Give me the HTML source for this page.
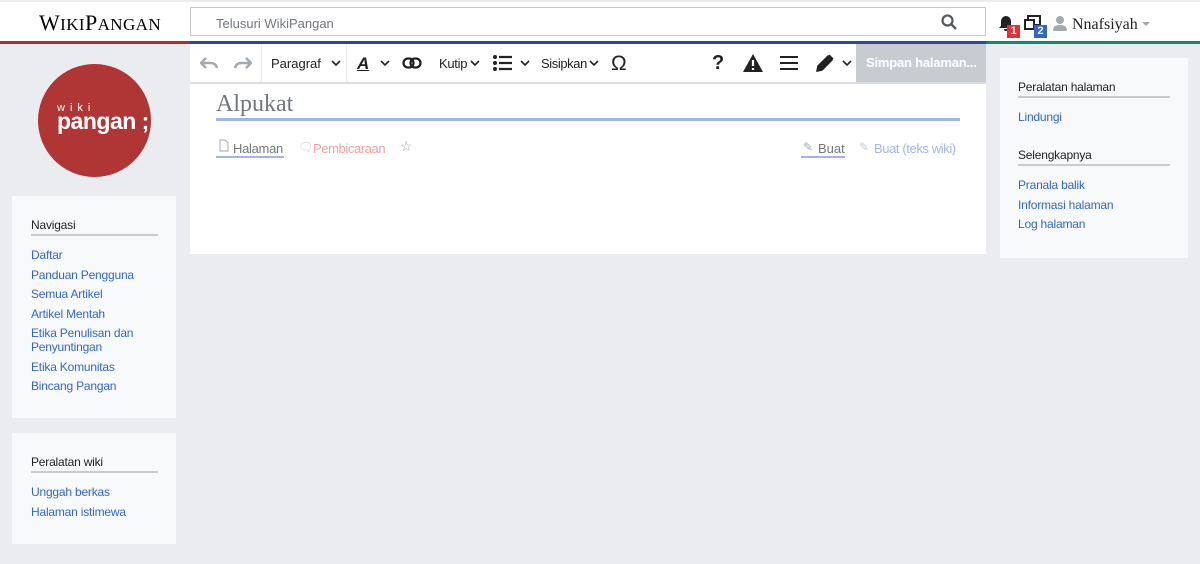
<!DOCTYPE html>
<html><head><meta charset="utf-8"><style>
*{box-sizing:border-box;margin:0;padding:0}
body{width:1200px;height:564px;background:#eaecf0;font-family:"Liberation Sans",sans-serif;position:relative;overflow:hidden;font-size:12px}
.abs{position:absolute}
a{color:#3366cc;text-decoration:none}
.panel{position:absolute;background:#f8f9fa}
.panel h3{font-weight:normal;font-size:12px;color:#222;border-bottom:2px solid #c8ccd1;padding-bottom:2px;margin-bottom:12px;letter-spacing:-0.2px}
.panel a{display:block;font-size:12px;line-height:14px;margin-bottom:5.5px;letter-spacing:-0.2px}
.tb{position:absolute;top:44px;height:39px;display:flex;align-items:center;font-size:13px;color:#222}
</style></head><body>
<div class="abs" style="left:0;top:0;width:1200px;height:41px;background:#fff;border-top:2px solid #eaecf0"></div>
<div class="abs" style="left:39px;top:10px;font-family:'Liberation Serif',serif;font-size:22px;color:#000;letter-spacing:0.4px">W<span style="font-size:17px">IKI</span>P<span style="font-size:17px">ANGAN</span></div>
<div class="abs" style="left:190px;top:7px;width:796px;height:29px;border:1px solid #c8ccd1;background:#fff"></div>
<div class="abs" style="left:216px;top:16px;font-size:13px;color:#72777d">Telusuri WikiPangan</div>
<svg class="abs" style="left:941px;top:14px" width="16" height="16" viewBox="0 0 16 16"><circle cx="6.5" cy="6.5" r="5" fill="none" stroke="#54595d" stroke-width="2.2"/><path d="M10 10l5 5" stroke="#54595d" stroke-width="2.4"/></svg>
<svg class="abs" style="left:998px;top:14px" width="16" height="18" viewBox="0 0 16 18"><path d="M3 12V7a5 5 0 0 1 10 0v5l2 2H1z M6 15h4a2 2 0 0 1-4 0z" fill="#222"/></svg>
<div class="abs" style="left:1007px;top:25px;width:13px;height:13px;background:#dd3333;color:#fff;font-size:11px;font-weight:bold;text-align:center;line-height:13px">1</div>
<svg class="abs" style="left:1024px;top:15px" width="18" height="16" viewBox="0 0 18 16"><rect x="4" y="1" width="12" height="9" fill="none" stroke="#222" stroke-width="2"/><rect x="1" y="5" width="9" height="9" fill="#fff" stroke="#222" stroke-width="2"/></svg>
<div class="abs" style="left:1034px;top:25px;width:13px;height:13px;background:#3366cc;color:#fff;font-size:11px;font-weight:bold;text-align:center;line-height:13px">2</div>
<svg class="abs" style="left:1053px;top:15px" width="14" height="16" viewBox="0 0 14 16"><circle cx="7" cy="5" r="4" fill="#a2a9b1"/><path d="M0 16c0-5 3-6 7-6s7 1 7 6z" fill="#a2a9b1"/></svg>
<div class="abs" style="left:1072px;top:16px;font-family:'Liberation Serif',serif;font-size:16px;color:#222">Nnafsiyah</div>
<div class="abs" style="left:1142px;top:22px;border:4px solid transparent;border-top:4px solid #a2a9b1"></div>
<div class="abs" style="left:0;top:41px;width:190px;height:3px;background:#b32d2e"></div>
<div class="abs" style="left:190px;top:41px;width:796px;height:3px;background:#2a4b8d"></div>
<div class="abs" style="left:986px;top:41px;width:214px;height:3px;background:#14866d"></div>

<div class="abs" style="left:38px;top:64px;width:113px;height:113px;border-radius:50%;background:#b03636"></div>
<div class="abs" style="left:57px;top:102px;color:#fff;font-size:11px;letter-spacing:5px">wiki</div>
<div class="abs" style="left:57px;top:108px;color:#fff;font-size:23px;font-weight:bold;letter-spacing:-0.5px">pangan ;</div>

<div class="panel" style="left:12px;top:196px;width:164px;height:222px;padding:22px 18px 0 19px">
<h3>Navigasi</h3>
<a>Daftar</a><a>Panduan Pengguna</a><a>Semua Artikel</a><a>Artikel Mentah</a><a>Etika Penulisan dan Penyuntingan</a><a>Etika Komunitas</a><a>Bincang Pangan</a>
</div>
<div class="panel" style="left:12px;top:433px;width:164px;height:111px;padding:22px 18px 0 19px">
<h3>Peralatan wiki</h3>
<a>Unggah berkas</a><a>Halaman istimewa</a>
</div>
<div class="panel" style="left:1000px;top:58px;width:188px;height:200px;padding:22px 18px 0 18px">
<h3>Peralatan halaman</h3>
<a>Lindungi</a>
<h3 style="margin-top:24px">Selengkapnya</h3>
<a>Pranala balik</a><a>Informasi halaman</a><a>Log halaman</a>
</div>

<div class="abs" style="left:190px;top:44px;width:796px;height:210px;background:#fff"></div>
<div class="abs" style="left:190px;top:82px;width:796px;height:2px;background:#dadde0"></div>
<div class="abs" style="left:261px;top:44px;width:1px;height:38px;background:#eaecf0"></div>
<div class="abs" style="left:346px;top:44px;width:1px;height:38px;background:#eaecf0"></div>
<div class="abs" style="left:856px;top:44px;width:130px;height:38px;background:#c8ccd1;color:#fff;font-weight:bold;font-size:13px;line-height:38px;padding-left:10px;letter-spacing:-0.2px">Simpan halaman...</div>
<svg class="abs" style="left:200px;top:57px" width="18" height="12" viewBox="0 0 18 12"><path d="M6 1L1 6l5 5M1 6h10a6 6 0 0 1 6 5" fill="none" stroke="#a2a9b1" stroke-width="2.5"/></svg>
<svg class="abs" style="left:234px;top:57px" width="18" height="12" viewBox="0 0 18 12"><path d="M12 1l5 5-5 5M17 6H7a6 6 0 0 0-6 5" fill="none" stroke="#a2a9b1" stroke-width="2.5"/></svg>
<div class="tb" style="left:271px">Paragraf</div>
<svg class="abs" style="left:331px;top:60px" width="10" height="7"><path d="M1 1l4 4 4-4" fill="none" stroke="#222" stroke-width="1.6"/></svg>
<div class="tb" style="left:357px;font-weight:bold;font-style:italic;font-size:17px;text-decoration:underline">A</div>
<svg class="abs" style="left:380px;top:60px" width="10" height="7"><path d="M1 1l4 4 4-4" fill="none" stroke="#222" stroke-width="1.6"/></svg>
<svg class="abs" style="left:402px;top:57px" width="20" height="12" viewBox="0 0 20 12"><rect x="1.5" y="1.5" width="10" height="9" rx="4.5" fill="none" stroke="#222" stroke-width="2.3"/><rect x="8.5" y="1.5" width="10" height="9" rx="4.5" fill="none" stroke="#222" stroke-width="2.3"/></svg>
<div class="tb" style="left:439px;letter-spacing:-0.3px">Kutip</div>
<svg class="abs" style="left:470px;top:60px" width="10" height="7"><path d="M1 1l4 4 4-4" fill="none" stroke="#222" stroke-width="1.6"/></svg>
<svg class="abs" style="left:493px;top:55px" width="20" height="16" viewBox="0 0 20 16"><circle cx="2" cy="2" r="2" fill="#222"/><circle cx="2" cy="8" r="2" fill="#222"/><circle cx="2" cy="14" r="2" fill="#222"/><path d="M6 2h13M6 8h13M6 14h13" stroke="#222" stroke-width="2.2"/></svg>
<svg class="abs" style="left:520px;top:60px" width="10" height="7"><path d="M1 1l4 4 4-4" fill="none" stroke="#222" stroke-width="1.6"/></svg>
<div class="tb" style="left:541px;letter-spacing:-0.4px">Sisipkan</div>
<svg class="abs" style="left:589px;top:60px" width="10" height="7"><path d="M1 1l4 4 4-4" fill="none" stroke="#222" stroke-width="1.6"/></svg>
<div class="tb" style="left:611px;font-size:21px">&#937;</div>
<div class="tb" style="left:712px;font-size:20px;font-weight:bold">?</div>
<svg class="abs" style="left:743px;top:54px" width="20" height="18" viewBox="0 0 20 18"><path d="M10 0L20 18H0z" fill="#222"/><path d="M10 6v6M10 14v2" stroke="#fff" stroke-width="2.2"/></svg>
<svg class="abs" style="left:780px;top:56px" width="18" height="14"><path d="M0 1h18M0 7h18M0 13h18" stroke="#222" stroke-width="2"/></svg>
<svg class="abs" style="left:816px;top:54px" width="18" height="18" viewBox="0 0 18 18"><path d="M1 17l1-5L12 2l4 4L6 16z M13 1l4 4" fill="#222" stroke="#222" stroke-width="1.5"/></svg>
<svg class="abs" style="left:842px;top:60px" width="10" height="7"><path d="M1 1l4 4 4-4" fill="none" stroke="#222" stroke-width="1.6"/></svg>

<div class="abs" style="left:216px;top:91px;font-family:'Liberation Serif',serif;font-size:24px;color:#72777d">Alpukat</div>
<div class="abs" style="left:216px;top:118px;width:744px;height:3px;background:#a3b5e6"></div>
<svg class="abs" style="left:219px;top:139px" width="10" height="13" viewBox="0 0 10 13"><path d="M1 1h5l3 3v8H1z" fill="none" stroke="#a2a9b1"/></svg>
<div class="abs" style="left:233px;top:141px;font-size:13px;color:#72777d;letter-spacing:-0.3px">Halaman</div>
<div class="abs" style="left:216px;top:156px;width:68px;height:2px;background:#a3b5e6"></div>
<div class="abs" style="left:298px;top:140px;font-size:12px;color:#c8ccd1">&#x1F5E8;</div>
<div class="abs" style="left:313px;top:141px;font-size:13px;color:#f0a0a0;letter-spacing:-0.4px">Pembicaraan</div>
<div class="abs" style="left:400px;top:138px;font-size:14px;color:#a2a9b1">&#9734;</div>
<div class="abs" style="left:803px;top:140px;font-size:12px;color:#a2a9b1">&#x270E;</div>
<div class="abs" style="left:818px;top:141px;font-size:13px;color:#72777d">Buat</div>
<div class="abs" style="left:801px;top:156px;width:44px;height:2px;background:#a3b5e6"></div>
<div class="abs" style="left:859px;top:140px;font-size:12px;color:#c8ccd1">&#x270E;</div>
<div class="abs" style="left:874px;top:141px;font-size:13px;color:#a3b5e6;letter-spacing:-0.4px">Buat (teks wiki)</div>
</body></html>
